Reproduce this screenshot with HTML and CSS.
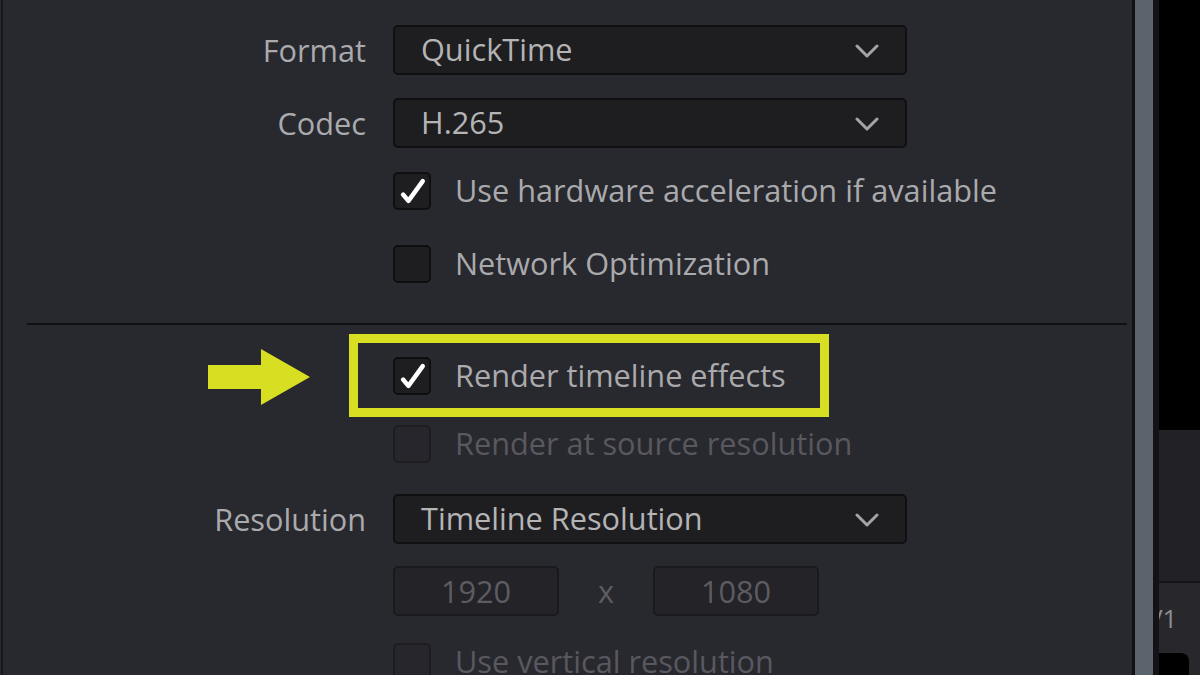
FILE: index.html
```html
<!DOCTYPE html>
<html lang="en">
<head>
<meta charset="utf-8">
<title>Render settings</title>
<link rel="stylesheet" href="styles.css">
</head>
<body>
<div class="app">
  <main class="panel">
    <div class="form">
      <div class="row row-select">
        <div class="label">Format</div>
        <div class="select"><span>QuickTime</span><svg class="chev" viewBox="0 0 24 14"><polyline points="2,2 12,12 22,2"/></svg></div>
      </div>
      <div class="row row-select gap-23">
        <div class="label">Codec</div>
        <div class="select"><span>H.265</span><svg class="chev" viewBox="0 0 24 14"><polyline points="2,2 12,12 22,2"/></svg></div>
      </div>
      <div class="row row-check gap-24">
        <div class="label"></div>
        <div class="check">
          <span class="box"><svg viewBox="0 0 38 38"><polyline points="9,23 15,30 31,8"/></svg></span>
          <span class="ctext">Use hardware acceleration if available</span>
        </div>
      </div>
      <div class="row row-check gap-35">
        <div class="label"></div>
        <div class="check">
          <span class="box"></span>
          <span class="ctext">Network Optimization</span>
        </div>
      </div>
      <div class="sep"></div>
      <div class="row row-check gap-32 highlighted">
        <div class="label arrow-cell">
          <svg class="arrow" viewBox="0 0 102 56"><polygon points="0,16 53,16 53,0 102,28 53,56 53,40 0,40"/></svg>
        </div>
        <div class="check">
          <span class="box"><svg viewBox="0 0 38 38"><polyline points="9,23 15,30 31,8"/></svg></span>
          <span class="ctext">Render timeline effects</span>
          <span class="hl"></span>
        </div>
      </div>
      <div class="row row-check gap-30 disabled">
        <div class="label"></div>
        <div class="check">
          <span class="box"></span>
          <span class="ctext">Render at source resolution</span>
        </div>
      </div>
      <div class="row row-select gap-31">
        <div class="label">Resolution</div>
        <div class="select"><span>Timeline Resolution</span><svg class="chev" viewBox="0 0 24 14"><polyline points="2,2 12,12 22,2"/></svg></div>
      </div>
      <div class="row row-select gap-22">
        <div class="label"></div>
        <div class="dims">
          <div class="num">1920</div>
          <div class="times">x</div>
          <div class="num">1080</div>
        </div>
      </div>
      <div class="row row-check gap-27 disabled">
        <div class="label"></div>
        <div class="check">
          <span class="box"></span>
          <span class="ctext">Use vertical resolution</span>
        </div>
      </div>
    </div>
  </main>
  <div class="edge"></div>
  <div class="scrollbar"></div>
  <div class="edge2"></div>
  <aside class="side">
    <div class="viewer"></div>
    <div class="strip"></div>
    <div class="track">
      <div class="track-name"><span>V1</span></div>
      <div class="clip"></div>
    </div>
  </aside>
</div>
</body>
</html>
```

FILE: styles.css
```css
* { box-sizing: border-box; }
html, body {
  margin: 0;
  padding: 0;
  width: 1200px;
  height: 675px;
  overflow: hidden;
  background: #28282f;
  font-family: "Open Sans", "Noto Sans", sans-serif;
}
.app {
  display: flex;
  width: 1200px;
  height: 675px;
}
.panel {
  width: 1131px;
  height: 675px;
  background: #28282f;
  border-left: 2px solid #18181c;
  margin-left: 1px;
  overflow: hidden;
}
.form {
  padding-top: 25px;
}
.row {
  display: grid;
  grid-template-columns: 363px 514px;
  column-gap: 27px;
  align-items: center;
}
.row-select { height: 50px; }
.row-check { height: 38px; }
.gap-22 { margin-top: 22px; }
.gap-23 { margin-top: 23px; }
.gap-24 { margin-top: 24px; }
.gap-27 { margin-top: 27px; }
.gap-30 { margin-top: 30px; }
.gap-31 { margin-top: 31px; }
.gap-32 { margin-top: 32px; }
.gap-35 { margin-top: 35px; }

.label {
  text-align: right;
  color: #aaaaad;
  font-size: 30.7px;
  line-height: 50px;
}
.select {
  height: 50px;
  background: #1e1e20;
  border: 2px solid #101012;
  border-radius: 5px;
  display: flex;
  align-items: center;
  justify-content: space-between;
  padding: 0 26px 0 26px;
  color: #b4b4b6;
  font-size: 30.7px;
}
.select span { line-height: 1; position: relative; top: -1px; }
.chev {
  width: 24px;
  height: 14px;
  fill: none;
  stroke: #a4a4a6;
  stroke-width: 3;
  stroke-linecap: round;
  stroke-linejoin: round;
  margin-top: 2px;
}
.check {
  display: flex;
  align-items: center;
  gap: 24px;
  height: 38px;
  position: relative;
}
.box {
  width: 38px;
  height: 38px;
  flex: none;
  background: #1e1e20;
  border: 2px solid #0f0f11;
  border-radius: 5px;
  display: flex;
}
.box svg {
  width: 34px;
  height: 34px;
  fill: none;
  stroke: #ffffff;
  stroke-width: 5;
  stroke-linecap: round;
  stroke-linejoin: round;
}
.ctext {
  color: #aaaaad;
  font-size: 30.7px;
  white-space: nowrap;
  position: relative;
  top: -1px;
}
.disabled .box {
  background: #26262c;
  border-color: #1d1d22;
}
.disabled .ctext { color: #58585e; }

.sep {
  height: 2px;
  background: #111114;
  margin: 40px 0 0 24px;
  width: 1100px;
}

.highlighted .arrow-cell {
  position: relative;
  height: 38px;
}
.arrow {
  position: absolute;
  left: 205px;
  top: -8px;
  width: 102px;
  height: 56px;
  fill: #d8df22;
}
.hl {
  position: absolute;
  left: -44px;
  top: -23px;
  width: 480px;
  height: 83px;
  border: 9px solid #d8df22;
  pointer-events: none;
}

.dims {
  display: flex;
  align-items: center;
  height: 50px;
}
.num {
  width: 166px;
  height: 50px;
  background: #232328;
  border: 2px solid #1a1a1e;
  border-radius: 5px;
  color: #5c5c62;
  font-size: 30.7px;
  display: flex;
  align-items: center;
  justify-content: center;
}
.times {
  width: 94px;
  text-align: center;
  color: #5c5c62;
  font-size: 30.7px;
}

.edge { width: 3px; background: #101013; flex: none; }
.scrollbar { width: 18px; background: #5b636c; flex: none; }
.edge2 { width: 6px; background: #131317; flex: none; }
.side {
  flex: 1;
  display: flex;
  flex-direction: column;
  overflow: hidden;
}
.viewer { height: 430px; background: #000; }
.strip { height: 153px; background: #212126; border-bottom: 2px solid #141417; }
.track {
  flex: 1;
  background: #27272c;
  display: flex;
  flex-direction: column;
}
.track-name {
  height: 70px;
  overflow: hidden;
  color: #8c8c90;
  font-size: 26px;
  display: flex;
  align-items: center;
}
.track-name span {
  margin-left: -12px;
}
.clip {
  width: 30px;
  flex: 1;
  background: #000;
  border-top-right-radius: 8px;
}
```
